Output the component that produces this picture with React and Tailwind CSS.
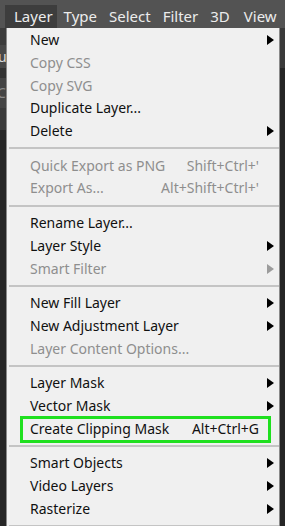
import React from "react";

const groups = [
  [
    { label: "New", sub: true },
    { label: "Copy CSS", off: true },
    { label: "Copy SVG", off: true },
    { label: "Duplicate Layer..." },
    { label: "Delete", sub: true },
  ],
  [
    { label: "Quick Export as PNG", keys: "Shift+Ctrl+'", off: true },
    { label: "Export As...", keys: "Alt+Shift+Ctrl+'", off: true },
  ],
  [
    { label: "Rename Layer..." },
    { label: "Layer Style", sub: true },
    { label: "Smart Filter", sub: true, off: true },
  ],
  [
    { label: "New Fill Layer", sub: true },
    { label: "New Adjustment Layer", sub: true },
    { label: "Layer Content Options...", off: true },
  ],
  [
    { label: "Layer Mask", sub: true },
    { label: "Vector Mask", sub: true },
    { label: "Create Clipping Mask", keys: "Alt+Ctrl+G", mark: true },
  ],
  [
    { label: "Smart Objects", sub: true },
    { label: "Video Layers", sub: true },
    { label: "Rasterize", sub: true },
  ],
];

const Arrow = ({ off }) => (
  <svg width="7" height="10" viewBox="0 0 7 10" className="absolute right-[5px] top-1/2 -translate-y-1/2">
    <path d="M0 0 L7 5 L0 10 Z" fill={off ? "#9c9c9c" : "#000"} />
  </svg>
);

const Row = ({ item }) => (
  <div className="relative flex h-[22.7px] shrink-0 items-center pl-[23px] pr-[20px]">
    <span className={item.off ? "text-[#8e8e8e]" : "text-[#111]"}>{item.label}</span>
    {item.keys && (
      <span className={"ml-auto " + (item.off ? "text-[#8e8e8e]" : "text-[#111]")}>{item.keys}</span>
    )}
    {item.sub && <Arrow off={item.off} />}
    {item.mark && (
      <div className="absolute left-[13px] right-[8px] top-[-1px] bottom-[-3px] border-[3px] border-[#1fe01f]" />
    )}
  </div>
);

const Separator = () => (
  <div className="flex h-[12px] shrink-0 items-center pl-[2px]">
    <div className="h-[2px] w-full bg-[#c4c4c4]" />
  </div>
);

export default function App() {
  return (
    <div
      className="flex h-[526px] w-[285px] flex-col overflow-hidden bg-[#262626] text-[14px] leading-none"
      style={{ fontFamily: '"Noto Sans", "Open Sans", sans-serif' }}
    >
      <div className="flex h-[28px] shrink-0 items-end bg-[#535353] pl-[5px] text-[15px] text-[#ececec]">
        <div className="flex h-[23px] items-center bg-[#3d3d3d] pl-[9px] pr-[4px]">Layer</div>
        <div className="flex h-[23px] items-center gap-[12px] pl-[7px]">
          <span>Type</span>
          <span>Select</span>
          <span>Filter</span>
          <span>3D</span>
          <span className="ml-[2px]">View</span>
        </div>
      </div>
      <div className="flex min-h-0 flex-1">
        <div className="flex w-[6px] shrink-0 flex-col overflow-hidden text-[#d8d8d8]">
          <div className="h-[17px] shrink-0 bg-[#3c3c3c]" />
          <div className="flex h-[23px] shrink-0 items-center bg-[#484848]">
            <span className="-ml-[2px]">u</span>
          </div>
          <div className="h-[10px] shrink-0 bg-[#333333]" />
          <div className="flex h-[30px] shrink-0 items-center bg-[#444444] text-[#8a8a8a]">
            <span className="-ml-[3px]">C</span>
          </div>
          <div className="h-[22px] shrink-0 bg-[#3a3a3a]" />
          <div className="flex-1 bg-[#262626]" />
        </div>
        <div className="flex w-[274px] shrink-0 flex-col border-x border-[#8a8a8a] bg-[#f0f0f0] pt-[1px]">
          {groups.map((g, i) => (
            <React.Fragment key={i}>
              {i > 0 && <Separator />}
              {g.map((item) => (
                <Row key={item.label} item={item} />
              ))}
            </React.Fragment>
          ))}
          <Separator />
        </div>
        <div className="flex flex-1 flex-col">
          <div className="h-[40px] bg-[#3a3a3a]" />
          <div className="flex-1 bg-[#262626]" />
        </div>
      </div>
    </div>
  );
}
